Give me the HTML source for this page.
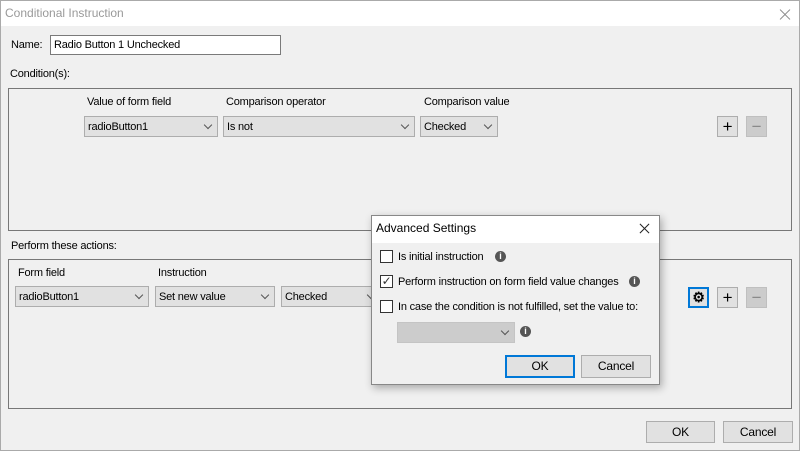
<!DOCTYPE html>
<html><head><style>
*{box-sizing:border-box;margin:0;padding:0}
body{width:800px;height:451px;background:#f0f0f0;font-family:"Liberation Sans",sans-serif;font-size:11px;letter-spacing:-0.2px;color:#000;position:relative;overflow:hidden}
.a{position:absolute}
.win{left:0;top:0;width:800px;height:451px;border:1px solid #aaa;background:#f0f0f0}
.tb{left:1px;top:1px;width:798px;height:25px;background:#fff}
.box{border:1px solid #777}
.cb{position:absolute;height:21px;background:#e1e1e1;border:1px solid #adadad;padding:3px 0 0 3px;line-height:14px}
.cb:after{content:"";position:absolute;right:6px;top:5px;width:5px;height:5px;border-right:1px solid #555;border-bottom:1px solid #555;transform:rotate(45deg)}
.btn{position:absolute;background:#e1e1e1;border:1px solid #adadad;text-align:center;line-height:20px;font-size:12px}
.sb{position:absolute;width:21px;height:21px;background:#e1e1e1;border:1px solid #adadad;text-align:center;line-height:19px;font-size:17px}
.dis{background:#cccccc;border-color:#bfbfbf;color:#888}
.chk{position:absolute;width:13px;height:13px;border:1px solid #333;background:#fff}
.info{position:absolute;width:11px;height:11px;border-radius:50%;background:#555;color:#fff;font-size:9px;font-weight:bold;text-align:center;line-height:11px;letter-spacing:0}
.x{position:absolute}
.x:before,.x:after{content:"";position:absolute;left:0;top:50%;width:100%;height:1px;background:currentColor}
.x:before{transform:rotate(45deg)}.x:after{transform:rotate(-45deg)}
</style></head><body>
<div class="a win"></div>
<div class="a tb"></div>
<div class="a" style="left:5px;top:6px;color:#999;font-size:12px;letter-spacing:0">Conditional Instruction</div>
<div class="x" style="left:778px;top:7px;width:14px;height:14px;color:#888"></div>
<div class="a" style="left:11px;top:39px">Name:</div>
<div class="a" style="left:50px;top:35px;width:231px;height:20px;background:#fff;border:1px solid #7a7a7a;padding:3px 0 0 3px">Radio Button 1 Unchecked</div>
<div class="a" style="left:10px;top:68px">Condition(s):</div>
<div class="a box" style="left:8px;top:88px;width:784px;height:143px"></div>
<div class="a" style="left:87px;top:96px">Value of form field</div>
<div class="a" style="left:226px;top:96px">Comparison operator</div>
<div class="a" style="left:424px;top:96px">Comparison value</div>
<div class="cb" style="left:84px;top:116px;width:134px">radioButton1</div>
<div class="cb" style="left:223px;top:116px;width:192px">Is not</div>
<div class="cb" style="left:420px;top:116px;width:78px">Checked</div>
<div class="sb" style="left:717px;top:116px">+</div>
<div class="sb dis" style="left:746px;top:116px">−</div>
<div class="a" style="left:11px;top:240px">Perform these actions:</div>
<div class="a box" style="left:8px;top:259px;width:784px;height:150px"></div>
<div class="a" style="left:18px;top:267px">Form field</div>
<div class="a" style="left:158px;top:267px">Instruction</div>
<div class="cb" style="left:15px;top:286px;width:134px">radioButton1</div>
<div class="cb" style="left:155px;top:286px;width:120px">Set new value</div>
<div class="cb" style="left:281px;top:286px;width:100px">Checked</div>
<div class="sb" style="left:688px;top:287px;border:2px solid #0078d7;font-size:14px;line-height:17px;font-weight:bold">⚙</div>
<div class="sb" style="left:717px;top:287px">+</div>
<div class="sb dis" style="left:746px;top:287px">−</div>
<div class="btn" style="left:646px;top:421px;width:69px;height:22px">OK</div>
<div class="btn" style="left:723px;top:421px;width:70px;height:22px">Cancel</div>
<div class="a" style="left:371px;top:215px;width:289px;height:170px;background:#f0f0f0;border:1px solid #888;box-shadow:2px 3px 8px rgba(0,0,0,.3)"></div>
<div class="a" style="left:372px;top:216px;width:287px;height:27px;background:#fff"></div>
<div class="a" style="left:376px;top:221px;font-size:12px;letter-spacing:0">Advanced Settings</div>
<div class="x" style="left:638px;top:221px;width:13px;height:13px;color:#222"></div>
<div class="chk" style="left:380px;top:250px"></div>
<div class="a" style="left:398px;top:251px">Is initial instruction</div>
<div class="info" style="left:495px;top:251px">i</div>
<div class="chk" style="left:380px;top:275px;font-size:12px;line-height:11px;text-align:center;color:#333">✓</div>
<div class="a" style="left:398px;top:276px">Perform instruction on form field value changes</div>
<div class="info" style="left:629px;top:276px">i</div>
<div class="chk" style="left:380px;top:300px"></div>
<div class="a" style="left:398px;top:301px">In case the condition is not fulfilled, set the value to:</div>
<div class="cb" style="left:397px;top:322px;width:118px;background:#ccc;border-color:#c4c4c4"></div>
<div class="info" style="left:520px;top:326px">i</div>
<div class="btn" style="left:505px;top:355px;width:70px;height:23px;border:2px solid #0078d7;line-height:19px">OK</div>
<div class="btn" style="left:581px;top:355px;width:70px;height:23px">Cancel</div>
</body></html>
